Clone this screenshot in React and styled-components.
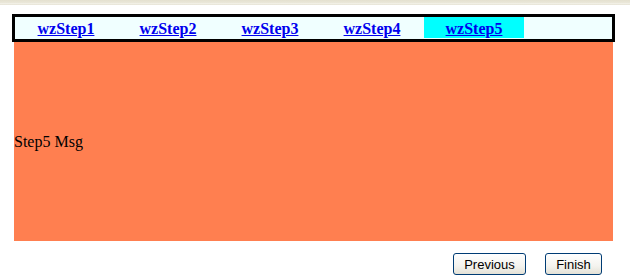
import React from 'react';
import styled, { createGlobalStyle } from 'styled-components';

const GlobalStyle = createGlobalStyle`
  body {
    margin: 0;
    background: #ffffff;
    font-family: 'Liberation Serif', 'Times New Roman', serif;
  }
`;

const steps = ['wzStep1', 'wzStep2', 'wzStep3', 'wzStep4', 'wzStep5'];
const current = 4;

const App = () => {
  return (
    <>
      <GlobalStyle />
      <TopEdge />
      <Wizard>
        <StepBar>
          {steps.map((s, i) => (
            <StepCell key={s} active={i === current}>
              <StepLink href="#">{s}</StepLink>
            </StepCell>
          ))}
        </StepBar>
        <Panel>Step5 Msg</Panel>
        <Buttons>
          <Button w={73}>Previous</Button>
          <Button w={57}>Finish</Button>
        </Buttons>
      </Wizard>
    </>
  );
};

export default App;

const TopEdge = styled.div`
  height: 5px;
  background: linear-gradient(#e4e0cf 0, #ebe8da 3px, #f7f6f0 4px, #dcd7c4 5px);
`;

const Wizard = styled.div`
  width: 603px;
  margin: 9px 0 0 12px;
`;

const StepBar = styled.div`
  display: flex;
  gap: 2px;
  padding: 0 1px;
  height: 22px;
  align-items: stretch;
  border: 3px solid #000000;
  background: #f0ffff;
`;

const StepCell = styled.div`
  width: 100px;
  margin: 0 0 1px;
  padding-top: 2px;
  box-sizing: border-box;
  display: flex;
  align-items: center;
  justify-content: center;
  background: ${(p) => (p.active ? '#00ffff' : 'transparent')};
`;

const StepLink = styled.a`
  color: #0000ee;
  font-weight: bold;
  font-size: 16px;
  text-decoration: underline;
`;

const Panel = styled.div`
  height: 199px;
  margin: 0 2px;
  display: flex;
  align-items: center;
  background: #ff7f50;
  color: #000000;
  font-size: 16px;
`;

const Buttons = styled.div`
  display: flex;
  justify-content: flex-end;
  gap: 19px;
  margin-top: 12px;
  padding-right: 13px;
`;

const Button = styled.button`
  width: ${(p) => p.w}px;
  height: 22px;
  padding: 0;
  border: 1px solid #003c74;
  border-radius: 3px;
  background: linear-gradient(#ffffff, #f4f3ee 60%, #e3e1d6);
  color: #000000;
  font-family: 'Liberation Sans', Arial, sans-serif;
  font-size: 13px;
`;
